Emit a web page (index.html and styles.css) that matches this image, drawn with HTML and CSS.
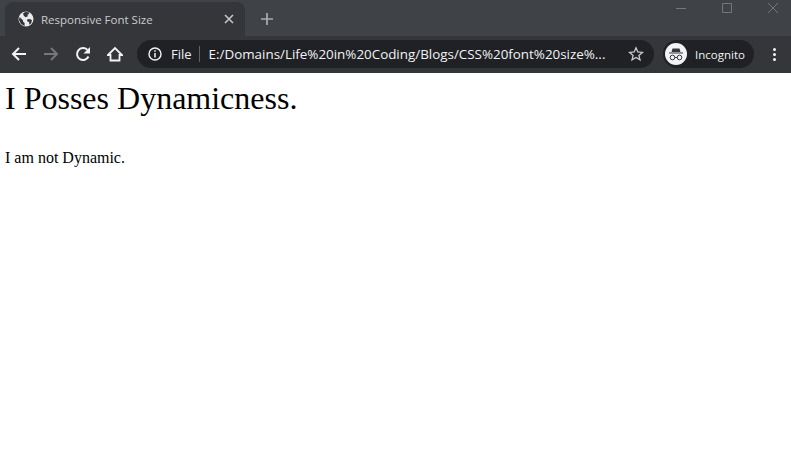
FILE: index.html
```html
<!DOCTYPE html>
<html lang="en">
<head>
    <meta charset="UTF-8">
    <title>Responsive Font Size</title>
    <link rel="stylesheet" href="styles.css">
</head>
<body>
    <div class="tabstrip">
        <div class="tab">
            <svg class="globe" width="16" height="16" viewBox="0 0 16 16">
                <circle cx="8" cy="8" r="7.5" fill="#e8eaed"/>
                <path d="M1.5 6l3.5 3.2v1.3l1.6 1.6V15L3 13 1 9z M7 1l3.5.2.8 1.3-1.8 1.2.4 1.6-2.4 1-1.7-1.5L5 2.6z M9.5 8l3.3.2 1.2 1.3-1 3-1.8 1.2v-2.5L9 10z" fill="#35363a"/>
            </svg>
            <span class="tab-title">Responsive Font Size</span>
            <svg class="tab-close" width="10" height="10" viewBox="0 0 10 10">
                <path d="M1 1l8 8M9 1l-8 8" stroke="#c4c7ca" stroke-width="1.6"/>
            </svg>
        </div>
        <svg class="new-tab" width="14" height="14" viewBox="0 0 14 14">
            <path d="M7 1v12M1 7h12" stroke="#a9acb0" stroke-width="1.7"/>
        </svg>
        <div class="win-controls">
            <svg width="12" height="12" viewBox="0 0 12 12"><path d="M1 6.500h10" stroke="#74777b"/></svg>
            <svg width="12" height="12" viewBox="0 0 12 12"><path d="M1.500 1.500h9v9h-9z" stroke="#74777b" fill="none"/></svg>
            <svg width="12" height="12" viewBox="0 0 12 12"><path d="M1 1l10 10M11 1L1 11" stroke="#74777b" fill="none"/></svg>
        </div>
    </div>

    <div class="toolbar">
        <svg class="nav" width="16" height="16" viewBox="0 0 16 16">
            <path d="M15 8H2M8 2L2 8l6 6" stroke="#f1f3f4" stroke-width="2" fill="none"/>
        </svg>
        <svg class="nav" width="16" height="16" viewBox="0 0 16 16">
            <path d="M1 8h13M8 2l6 6-6 6" stroke="#75777a" stroke-width="2" fill="none"/>
        </svg>
        <svg class="nav" width="16" height="16" viewBox="0 0 16 16">
            <path d="M13.500 10.500A6 6 0 1 1 12.300 3.800" stroke="#f1f3f4" stroke-width="2" fill="none"/>
            <path d="M15 1v6.500H8.500z" fill="#f1f3f4"/>
        </svg>
        <svg class="nav" width="16" height="16" viewBox="0 0 16 16">
            <path d="M1 9L8 2l7 7h-2.500v5.500h-9V9z" stroke="#f1f3f4" stroke-width="1.800" stroke-linejoin="miter" fill="none"/>
        </svg>

        <div class="omnibox">
            <svg class="info" width="14" height="14" viewBox="0 0 14 14">
                <circle cx="7" cy="7" r="6" stroke="#f1f3f4" stroke-width="1.4" fill="none"/>
                <path d="M7 6v4.500M7 3.300v1.500" stroke="#f1f3f4" stroke-width="1.500"/>
            </svg>
            <span class="scheme">File</span>
            <span class="sep"></span>
            <span class="url">E:/Domains/Life%20in%20Coding/Blogs/CSS%20font%20size%...</span>
            <svg class="star" width="16" height="16" viewBox="0 0 16 16">
                <path d="M8 1.800l1.800 4.200 4.600.4-3.500 3 1.100 4.500L8 11.500l-4 2.400 1.100-4.500-3.500-3 4.600-.4z" stroke="#c9cccf" stroke-width="1.300" fill="none"/>
            </svg>
        </div>

        <div class="profile">
            <svg class="avatar" width="22" height="22" viewBox="0 0 22 22">
                <circle cx="11" cy="11" r="11" fill="#f1f3f4"/>
                <path d="M7.500 5.500h7l1 3.500H6.500zM4 9.500h14v1H4z" fill="#35363a"/>
                <circle cx="7.500" cy="14.500" r="2.300" stroke="#35363a" fill="none"/>
                <circle cx="14.500" cy="14.500" r="2.300" stroke="#35363a" fill="none"/>
                <path d="M9.800 14.500h2.400" stroke="#35363a"/>
            </svg>
            <span class="profile-name">Incognito</span>
        </div>

        <div class="menu">
            <span></span><span></span><span></span>
        </div>
    </div>

    <div class="page">
        <p class="big">I Posses Dynamicness.</p>
        <p class="small">I am not Dynamic.</p>
    </div>
</body>
</html>
```

FILE: styles.css
```css
html, body {
    margin: 0;
    height: 100%;
    overflow: hidden;
    background: #fff;
}

body {
    font-family: "Open Sans", "Liberation Sans", sans-serif;
}

.tabstrip {
    height: 36px;
    background: #3f4347;
    display: flex;
    align-items: flex-end;
    padding-left: 5px;
    box-sizing: border-box;
}

.tab {
    width: 240px;
    height: 34px;
    background: #35363a;
    border-radius: 8px 8px 0 0;
    display: flex;
    align-items: center;
    padding: 0 11px 0 13px;
    box-sizing: border-box;
}

.globe {
    flex: none;
}

.tab-title {
    margin-left: 7px;
    flex: 1;
    font-size: 11.5px;
    color: #c9cccf;
}

.new-tab {
    margin: 0 0 10px 15px;
}

.win-controls {
    margin-left: auto;
    align-self: flex-start;
    display: flex;
    gap: 34px;
    padding: 2px 12px 0 0;
}

.toolbar {
    height: 37px;
    background: #35363a;
    display: flex;
    align-items: center;
    padding: 0 0 1px 11px;
    box-sizing: border-box;
}

.nav {
    margin-right: 16px;
    flex: none;
}

.omnibox {
    width: 517px;
    height: 28px;
    margin-left: -2px;
    border-radius: 14px;
    background: #202124;
    display: flex;
    align-items: center;
    padding: 0 10px 0 11px;
    box-sizing: border-box;
    color: #f1f3f4;
    font-size: 13px;
}

.scheme {
    margin-left: 9px;
}

.sep {
    width: 1px;
    height: 16px;
    background: #5f6368;
    margin: 0 9px 0 7px;
}

.url {
    flex: 1;
    white-space: nowrap;
    overflow: hidden;
    font-size: 13.4px;
}

.star {
    flex: none;
}

.profile {
    margin-left: 9px;
    width: 91px;
    height: 28px;
    border-radius: 14px;
    background: #202124;
    display: flex;
    align-items: center;
    padding-left: 2px;
    box-sizing: border-box;
}

.profile-name {
    margin-left: 8px;
    font-size: 11.5px;
    color: #f1f3f4;
}

.menu {
    margin-left: 19px;
    display: flex;
    flex-direction: column;
    gap: 2px;
}

.menu span {
    width: 3px;
    height: 3px;
    border-radius: 50%;
    background: #f1f3f4;
}

.page {
    padding: 0 5px;
    font-family: "Liberation Serif", serif;
    color: #000;
}

.big {
    margin: 7px 0 0;
    font-size: 32px;
    line-height: 37px;
}

.small {
    margin: 32px 0 0;
    font-size: 16px;
    line-height: 18px;
}
```
